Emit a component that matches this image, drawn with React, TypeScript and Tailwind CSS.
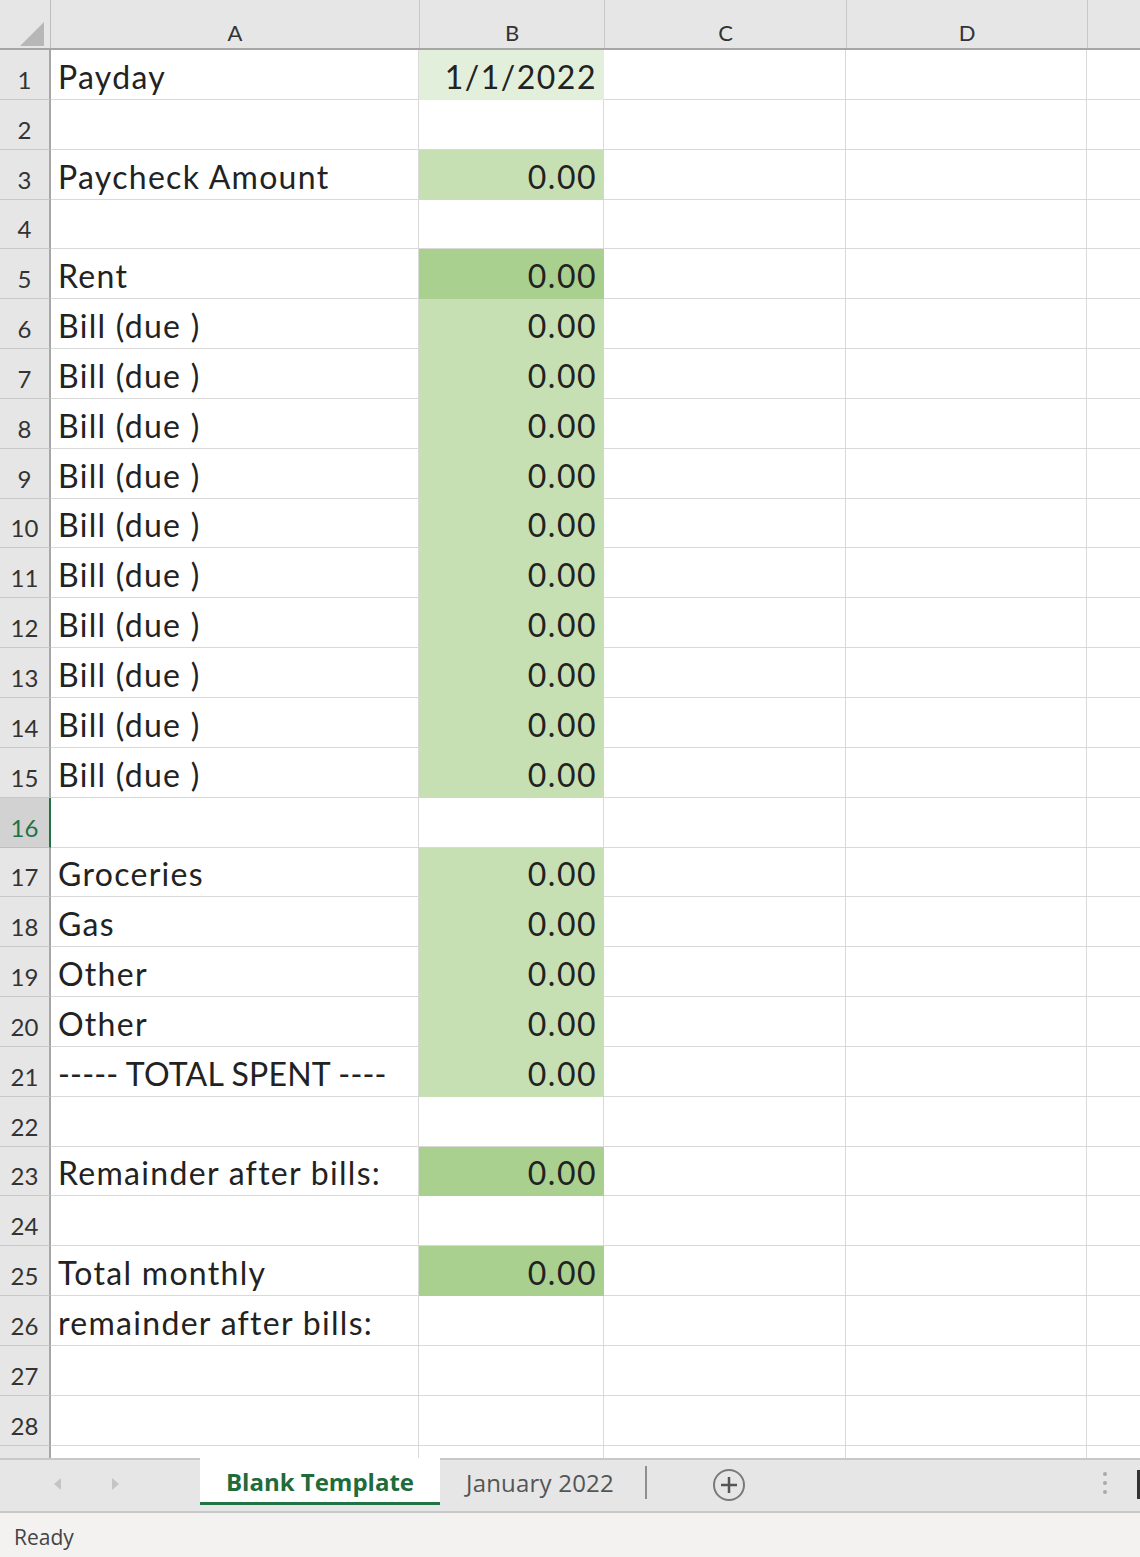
import React from "react";

type Row = { n: number; a?: string; b?: string; fill?: string; tight?: boolean };

const L = "#c6e0b4";
const D = "#a9d08e";

const rows: Row[] = [
  { n: 1, a: "Payday", b: "1/1/2022", fill: "#e2efda" },
  { n: 2 },
  { n: 3, a: "Paycheck Amount", b: "0.00", fill: L },
  { n: 4 },
  { n: 5, a: "Rent", b: "0.00", fill: D },
  ...[6, 7, 8, 9, 10, 11, 12, 13, 14, 15].map((n) => ({ n, a: "Bill (due )", b: "0.00", fill: L })),
  { n: 16 },
  { n: 17, a: "Groceries", b: "0.00", fill: L },
  { n: 18, a: "Gas", b: "0.00", fill: L },
  { n: 19, a: "Other", b: "0.00", fill: L },
  { n: 20, a: "Other", b: "0.00", fill: L },
  { n: 21, a: "----- TOTAL SPENT ----", b: "0.00", fill: L, tight: true },
  { n: 22 },
  { n: 23, a: "Remainder after bills:", b: "0.00", fill: D },
  { n: 24 },
  { n: 25, a: "Total monthly", b: "0.00", fill: D },
  { n: 26, a: "remainder after bills:" },
  { n: 27 },
  { n: 28 },
];

const font = { fontFamily: "Lato, 'Open Sans', sans-serif" };
const ui = { fontFamily: "'Open Sans', sans-serif" };

export default function App() {
  return (
    <div className="w-[1140px] h-[1557px] bg-white overflow-hidden flex flex-col text-[#222]" style={font}>
      {/* column header */}
      <div className="flex h-[50px] shrink-0 bg-[#e6e6e6] border-b-2 border-[#a6a6a6]">
        <div className="w-[51px] border-r border-[#bdbdbd] relative">
          <svg className="absolute left-[20px] top-[22px]" width="24" height="24" viewBox="0 0 24 24">
            <polygon points="24,0 24,24 0,24" fill="#b7b7b7" />
          </svg>
        </div>
        {[
          ["A", "w-[369px]"],
          ["B", "w-[185px]"],
          ["C", "w-[242px]"],
          ["D", "w-[241px]"],
        ].map(([c, w]) => (
          <div key={c} className={`${w} border-r border-[#c8c8c8] flex items-end justify-center pb-[4px] text-[22px] leading-none text-[#333]`}>
            {c}
          </div>
        ))}
        <div className="flex-1" />
      </div>

      {/* rows */}
      {rows.map((r) => {
        const sel = r.n === 16;
        return (
          <div key={r.n} className="flex h-[49.85px] shrink-0">
            <div
              className={`w-[51px] border-b border-r-2 flex items-end justify-center pb-[7px] text-[24px] leading-none ${
                sel ? "bg-[#d2d2d2] text-[#217346] border-b-[#bdbdbd] border-r-[#217346]" : "bg-[#e6e6e6] text-[#333] border-b-[#c8c8c8] border-r-[#a6a6a6]"
              }`}
            >
              {r.n}
            </div>
            <div
              className={`w-[368px] border-b border-r border-[#d9d9d9] flex items-end pl-[7px] pb-[6px] text-[32px] leading-none whitespace-nowrap overflow-visible ${
                r.tight ? "tracking-[0.2px]" : "tracking-[1.3px]"
              }`}
            >
              {r.a ?? ""}
            </div>
            <div
              className="w-[185px] border-b border-r flex items-end justify-end pr-[6px] pb-[6px] text-[32px] leading-none tracking-[1.5px]"
              style={{ backgroundColor: r.fill ?? "#ffffff", borderColor: r.fill ?? "#d9d9d9" }}
            >
              {r.b ?? ""}
            </div>
            <div className="w-[242px] border-b border-r border-[#d9d9d9]" />
            <div className="w-[241px] border-b border-r border-[#d9d9d9]" />
            <div className="flex-1 border-b border-[#d9d9d9]" />
          </div>
        );
      })}
      {/* partial row 29 */}
      <div className="flex h-[12px] shrink-0">
        <div className="w-[51px] bg-[#e6e6e6] border-r-2 border-[#a6a6a6]" />
        <div className="w-[368px] border-r border-[#d9d9d9]" />
        <div className="w-[185px] border-r border-[#d9d9d9]" />
        <div className="w-[242px] border-r border-[#d9d9d9]" />
        <div className="w-[241px] border-r border-[#d9d9d9]" />
        <div className="flex-1" />
      </div>

      {/* sheet tabs */}
      <div className="h-[55px] shrink-0 bg-[#e6e6e6] border-t-2 border-b-2 border-[#c8c8c8] flex items-stretch">
        <div className="w-[200px] flex items-center pb-[2px]">
          <svg className="ml-[54px]" width="8" height="12" viewBox="0 0 8 12">
            <polygon points="7,0 7,12 0,6" fill="#c4c4c4" />
          </svg>
          <svg className="ml-[49px]" width="8" height="12" viewBox="0 0 8 12">
            <polygon points="1,0 1,12 8,6" fill="#c4c4c4" />
          </svg>
        </div>
        <div className="w-[240px] -mt-[2px] mb-[6px] pt-[5px] bg-white border-b-[3px] border-[#217346] flex items-center justify-center text-[24px] font-bold text-[#1e6b3c]" style={ui}>
          Blank Template
        </div>
        <div className="w-[205px] flex items-center pl-[26px] pb-[4px] text-[24px] tracking-[0.2px] text-[#555]" style={ui}>
          January 2022
        </div>
        <div className="w-[2px] bg-[#8f8f8f] mt-[6px] mb-[12px]" />
        <div className="flex items-center pl-[65px] pb-[1px]">
          <svg width="34" height="34" viewBox="0 0 34 34">
            <circle cx="17" cy="17" r="15" fill="none" stroke="#7a7a7a" strokeWidth="2" />
            <line x1="17" y1="9" x2="17" y2="25" stroke="#555" strokeWidth="2.5" />
            <line x1="9" y1="17" x2="25" y2="17" stroke="#555" strokeWidth="2.5" />
          </svg>
        </div>
        <div className="flex-1" />
        <div className="flex flex-col items-center justify-center gap-[5px] pb-[4px] mr-[30px]">
          <div className="w-[4px] h-[4px] rounded-full bg-[#aaa]" />
          <div className="w-[4px] h-[4px] rounded-full bg-[#aaa]" />
          <div className="w-[4px] h-[4px] rounded-full bg-[#aaa]" />
        </div>
        <div className="w-[3px] bg-[#333] mt-[10px] mb-[12px]" />
      </div>

      {/* status bar */}
      <div className="flex-1 bg-[#f3f2f1] flex items-center pl-[14px] pt-[5px] text-[21px] text-[#444]" style={ui}>
        Ready
      </div>
    </div>
  );
}
